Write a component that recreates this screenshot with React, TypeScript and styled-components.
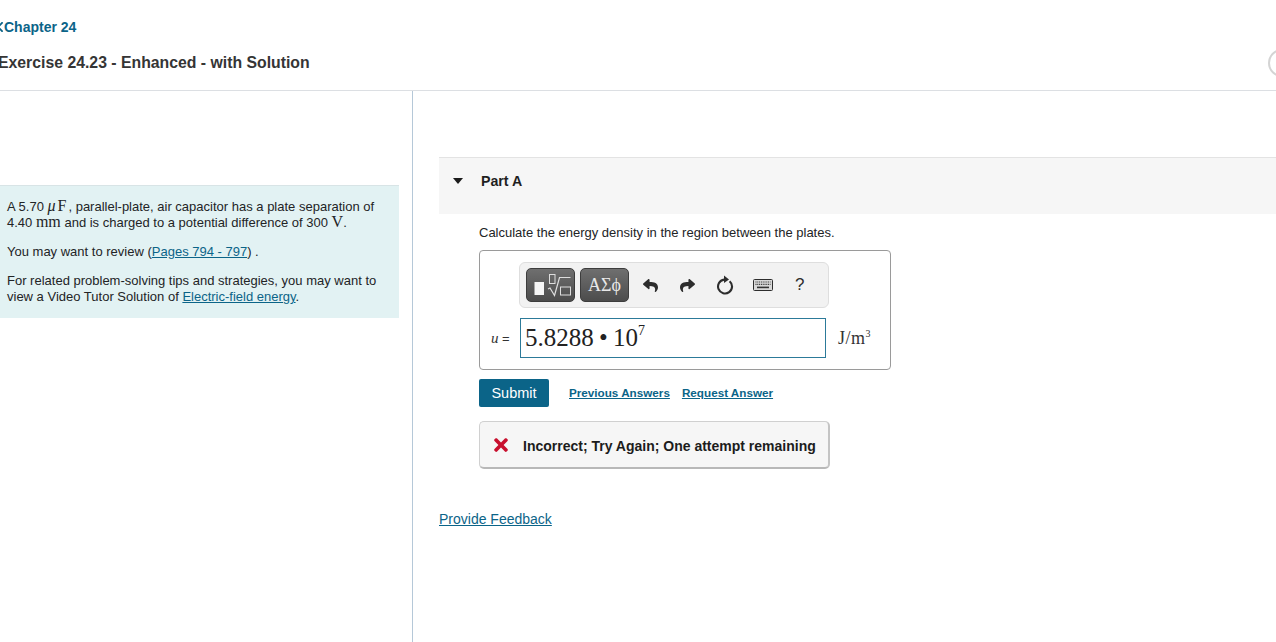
import type { FC } from 'react';
import styled, { createGlobalStyle } from 'styled-components';
import { FaReply, FaShare, FaTimes, FaChevronLeft } from 'react-icons/fa';

const TEAL = `#0b6488`;
const INK = `#222426`;
const SANS = `"Liberation Sans", Arial, sans-serif`;
const SERIF = `"Liberation Serif", "Times New Roman", serif`;

const GlobalStyle = createGlobalStyle`
  html, body {
    margin: 0;
    padding: 0;
    background: #fff;
    overflow: hidden;
  }
`;

const Page = styled.div`
  width: 1276px;
  height: 642px;
  overflow: hidden;
  display: flex;
  flex-direction: column;
  font-family: ${SANS};
  color: ${INK};
`;

const Header = styled.header`
  height: 90px;
  flex: none;
  border-bottom: 1px solid #dcdfe3;
  display: flex;
  justify-content: space-between;
  align-items: flex-start;
`;

const HeaderText = styled.div`
  display: flex;
  flex-direction: column;
  margin-left: -4px;
`;

const BackLink = styled.a`
  display: flex;
  align-items: center;
  margin-top: 19px;
  height: 16px;
  font-size: 14px;
  font-weight: 700;
  color: ${TEAL};
  svg {
    width: 8px;
    height: 12px;
  }
`;

const Title = styled.h1`
  margin: 18px 0 0 2px;
  font-size: 15.8px;
  line-height: 20px;
  font-weight: 700;
  color: #353535;
`;

const RoundButton = styled.div`
  width: 24px;
  height: 24px;
  flex: none;
  margin: 49px -20px 0 0;
  border: 2px solid #d4d4d4;
  border-radius: 50%;
`;

const Body = styled.div`
  flex: 1;
  display: flex;
  min-height: 0;
`;

const LeftColumn = styled.aside`
  width: 413px;
  flex: none;
  box-sizing: border-box;
  border-right: 1px solid #b5c8d8;
  padding-top: 94px;
`;

const ProblemBox = styled.section`
  width: 399px;
  height: 133px;
  box-sizing: border-box;
  background: #e2f2f3;
  border-top: 1px solid #d8e4e6;
  padding: 13px 0 0 7px;
  font-size: 13px;
  line-height: 16px;
`;

const Para = styled.p`
  margin: 0 0 13px;
`;

const Math = styled.span<{ $wide?: boolean }>`
  font-family: ${SERIF};
  font-size: 16px;
  line-height: 0;
  letter-spacing: ${(p) => (p.$wide ? '2px' : '0')};
`;

const TextLink = styled.a`
  color: ${TEAL};
  text-decoration: underline;
`;

const RightColumn = styled.main`
  flex: 1;
  min-width: 0;
  padding: 66px 0 0 26px;
`;

const PartHeader = styled.div`
  height: 57px;
  box-sizing: border-box;
  background: #f6f6f6;
  border-top: 1px solid #e3e3e3;
  display: flex;
  align-items: flex-start;
  padding: 14px 0 0 14px;
  gap: 18px;
`;

const Caret = styled.span`
  width: 0;
  height: 0;
  margin-top: 6px;
  border-left: 5.5px solid transparent;
  border-right: 5.5px solid transparent;
  border-top: 6px solid #1b1b1b;
`;

const PartTitle = styled.h2`
  margin: 0;
  font-size: 14.2px;
  line-height: 18px;
  font-weight: 700;
  color: #1f1f1f;
`;

const PartBody = styled.div`
  padding: 10px 0 0 40px;
`;

const Prompt = styled.p`
  margin: 0 0 9px;
  font-size: 13px;
  line-height: 17px;
`;

const AnswerBox = styled.div`
  width: 412px;
  height: 120px;
  box-sizing: border-box;
  border: 1px solid #9a9a9a;
  border-radius: 4px;
  padding: 11px 0 0 39px;
`;

const Toolbar = styled.div`
  width: 310px;
  height: 46px;
  box-sizing: border-box;
  background: #f2f2f2;
  border: 1px solid #dedede;
  border-radius: 6px;
  display: flex;
  align-items: center;
  padding-left: 6px;
`;

const ToolGroup = styled.div`
  display: flex;
  gap: 5px;
  margin-right: 3px;
`;

const DarkButton = styled.div`
  width: 49px;
  height: 34px;
  box-sizing: border-box;
  border-radius: 5px;
  border: 1px solid #3d3d3d;
  background: linear-gradient(#6f6f6f, #4c4c4c);
  color: #e8e8e8;
  display: flex;
  align-items: center;
  justify-content: center;
  font-family: ${SERIF};
  font-size: 18px;
`;

const IconSlot = styled.div`
  width: 37.3px;
  height: 34px;
  display: flex;
  align-items: center;
  justify-content: center;
  color: #2d2d2d;
  font-size: 17px;
  svg.fa {
    width: 15px;
    height: 15px;
  }
`;

const AnswerRow = styled.div`
  display: flex;
  align-items: center;
  margin: 10px 0 0 -28px;
`;

const VarLabel = styled.span`
  width: 29px;
  flex: none;
  font-size: 13px;
  color: #333;
  white-space: nowrap;
  em {
    font-family: ${SERIF};
    font-size: 15px;
  }
`;

const InputField = styled.div`
  width: 306px;
  height: 40px;
  flex: none;
  box-sizing: border-box;
  border: 1px solid #2c7a99;
  padding: 2px 0 0 4px;
  font-family: ${SERIF};
  font-size: 25px;
  line-height: 34px;
  word-spacing: -1px;
  color: #222;
  sup {
    font-size: 14px;
    line-height: 0;
    vertical-align: 11px;
  }
`;

const Units = styled.span`
  margin-left: 12px;
  font-family: ${SERIF};
  font-size: 18px;
  letter-spacing: 0.5px;
  color: #333;
  sup {
    font-size: 10px;
    line-height: 0;
    vertical-align: 7px;
  }
`;

const ActionRow = styled.div`
  display: flex;
  align-items: center;
  margin-top: 9px;
`;

const SubmitButton = styled.button`
  width: 70px;
  height: 28px;
  border: 0;
  border-radius: 2px;
  background: ${TEAL};
  color: #fff;
  font-family: ${SANS};
  font-size: 14.5px;
  margin-right: 20px;
  padding: 0;
`;

const ActionLink = styled.a`
  font-size: 11.7px;
  font-weight: 700;
  color: ${TEAL};
  text-decoration: underline;
  margin: 0 12px 2px 0;
`;

const Feedback = styled.div`
  width: 351px;
  height: 48px;
  margin-top: 14px;
  box-sizing: border-box;
  background: #f6f6f6;
  border: 1px solid #d0d0d0;
  border-bottom: 2px solid #b8b8b8;
  border-right: 2px solid #c4c4c4;
  border-radius: 5px;
  display: flex;
  align-items: center;
  padding: 2px 0 0 14px;
  gap: 15px;
  font-size: 14px;
  font-weight: 700;
  color: #1c1c1c;
  white-space: nowrap;
  svg {
    color: #c8102e;
    width: 14px;
    height: 20px;
    flex: none;
    margin-top: -2px;
  }
`;

const FeedbackLink = styled.a`
  display: inline-block;
  margin-top: 41px;
  font-size: 14px;
  line-height: 18px;
  color: ${TEAL};
  text-decoration: underline;
`;

const TemplatesIcon: FC = () => (
  <svg width="42" height="26" viewBox="0 0 42 26" fill="none" stroke="#dedede" strokeWidth="1">
    <rect x="4.5" y="10" width="9.5" height="13" fill="#f6f6f6" stroke="none" />
    <rect x="19.5" y="2.5" width="5.5" height="9" />
    <path d="M18 17l2 -1 4.5 7.5 5 -18h11" strokeWidth="1.2" />
    <rect x="30.5" y="15" width="10" height="8" />
  </svg>
);

const ResetIcon: FC = () => (
  <svg width="18" height="20" viewBox="0 0 18 20" fill="none">
    <path d="M13.6 6.2A7 7 0 1 1 8 4.6" stroke="#2d2d2d" strokeWidth="2.1" />
    <path d="M8 0.5l5 4-5 3.6z" fill="#2d2d2d" />
  </svg>
);

const KeyboardIcon: FC = () => (
  <svg width="20" height="12" viewBox="0 0 20 12">
    <rect x="0.5" y="0.5" width="19" height="11" rx="1" fill="#d8d8d8" stroke="#2d2d2d" />
    <path d="M2.5 3h15M2.5 5.4h15" stroke="#333" strokeWidth="1.2" strokeDasharray="1 .8" />
    <path d="M4 8.4h12" stroke="#333" strokeWidth="1.6" />
  </svg>
);

export default function App() {
  return (
    <Page>
      <GlobalStyle />
      <Header>
        <HeaderText>
          <BackLink><FaChevronLeft />Chapter 24</BackLink>
          <Title>Exercise 24.23 - Enhanced - with Solution</Title>
        </HeaderText>
        <RoundButton />
      </Header>
      <Body>
        <LeftColumn>
          <ProblemBox>
            <Para>
              A 5.70 <Math $wide><i>μ</i>F</Math>, parallel-plate, air capacitor has a plate separation of<br />
              4.40 <Math>mm</Math> and is charged to a potential difference of 300 <Math>V</Math>.
            </Para>
            <Para>
              You may want to review (<TextLink>Pages 794 - 797</TextLink>) .
            </Para>
            <Para>
              For related problem-solving tips and strategies, you may want to<br />
              view a Video Tutor Solution of <TextLink>Electric-field energy</TextLink>.
            </Para>
          </ProblemBox>
        </LeftColumn>
        <RightColumn>
          <PartHeader>
            <Caret />
            <PartTitle>Part A</PartTitle>
          </PartHeader>
          <PartBody>
            <Prompt>Calculate the energy density in the region between the plates.</Prompt>
            <AnswerBox>
              <Toolbar>
                <ToolGroup>
                  <DarkButton><TemplatesIcon /></DarkButton>
                  <DarkButton>ΑΣϕ</DarkButton>
                </ToolGroup>
                <IconSlot><FaReply className="fa" /></IconSlot>
                <IconSlot><FaShare className="fa" /></IconSlot>
                <IconSlot><ResetIcon /></IconSlot>
                <IconSlot><KeyboardIcon /></IconSlot>
                <IconSlot>?</IconSlot>
              </Toolbar>
              <AnswerRow>
                <VarLabel><em>u</em> =</VarLabel>
                <InputField>5.8288 • 10<sup>7</sup></InputField>
                <Units>J/m<sup>3</sup></Units>
              </AnswerRow>
            </AnswerBox>
            <ActionRow>
              <SubmitButton>Submit</SubmitButton>
              <ActionLink>Previous Answers</ActionLink>
              <ActionLink>Request Answer</ActionLink>
            </ActionRow>
            <Feedback><FaTimes />Incorrect; Try Again; One attempt remaining</Feedback>
          </PartBody>
          <FeedbackLink>Provide Feedback</FeedbackLink>
        </RightColumn>
      </Body>
    </Page>
  );
}
